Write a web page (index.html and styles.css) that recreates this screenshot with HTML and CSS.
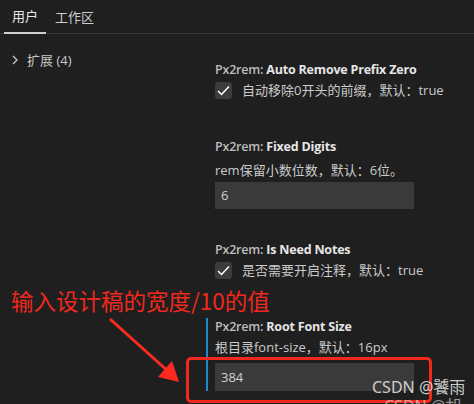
FILE: index.html
```html
<!DOCTYPE html>
<html lang="zh-CN">
<head>
    <meta charset="UTF-8">
    <title>设置 - Px2rem</title>
    <link rel="stylesheet" href="styles.css">
</head>
<body>
    <div class="tabs">
        <span class="tab active">用户</span>
        <span class="tab">工作区</span>
    </div>

    <div class="main">
        <aside class="toc">
            <div class="toc-item">
                <svg class="chevron" width="8" height="10" viewBox="0 0 8 10">
                    <path d="M2 1 L6 5 L2 9" fill="none" stroke="#cccccc" stroke-width="1.3"/>
                </svg>
                <span>扩展 (4)</span>
            </div>
        </aside>

        <section class="settings">
            <div class="setting setting-first">
                <div class="setting-title"><span class="category">Px2rem: </span>Auto Remove Prefix Zero</div>
                <label class="check-row">
                    <span class="checkbox">
                        <svg width="13" height="11" viewBox="0 0 13 11"><path d="M1 6 L4.5 9.5 L12 1.5" fill="none" stroke="#ffffff" stroke-width="1.5"/></svg>
                    </span>
                    <span class="desc">自动移除0开头的前缀，默认：true</span>
                </label>
            </div>

            <div class="setting setting-digits">
                <div class="setting-title"><span class="category">Px2rem: </span>Fixed Digits</div>
                <div class="desc desc-block">rem保留小数位数，默认：6位。</div>
                <div class="input">6</div>
            </div>

            <div class="setting setting-notes">
                <div class="setting-title"><span class="category">Px2rem: </span>Is Need Notes</div>
                <label class="check-row">
                    <span class="checkbox">
                        <svg width="13" height="11" viewBox="0 0 13 11"><path d="M1 6 L4.5 9.5 L12 1.5" fill="none" stroke="#ffffff" stroke-width="1.5"/></svg>
                    </span>
                    <span class="desc">是否需要开启注释，默认：true</span>
                </label>
            </div>

            <div class="setting setting-focused">
                <div class="setting-title"><span class="category">Px2rem: </span>Root Font Size</div>
                <div class="desc desc-block desc-root">根目录font-size，默认：16px</div>
                <div class="input input-root">384</div>
            </div>
        </section>
    </div>

    <!-- 标注 -->
    <div class="note-text">输入设计稿的宽度/10的值</div>
    <div class="note-box"></div>
    <svg class="note-arrow" width="474" height="404" viewBox="0 0 474 404">
        <line x1="110" y1="319" x2="170" y2="373" stroke="#ff2a1f" stroke-width="3"/>
        <polygon points="179,382 158,377 172,361" fill="#ff2a1f"/>
    </svg>

    <div class="watermark">CSDN @饕雨</div>
    <div class="watermark watermark-2">CSDN @胡阳了</div>
</body>
</html>
```

FILE: styles.css
```css
html {
    overflow: hidden;
}
body {
    margin: 0;
    background: #1f1f1f;
    color: #cccccc;
    font-family: "Open Sans", "Noto Sans CJK SC", sans-serif;
    font-size: 13px;
    width: 474px;
    height: 404px;
    overflow: hidden;
    position: relative;
}
.tabs {
    display: flex;
    height: 33px;
    padding-left: 4px;
    border-bottom: 1px solid #383838;
}
.tab {
    padding: 0 8px;
    line-height: 33px;
    color: #cfcfcf;
    margin-right: 1px;
    font-family: "Noto Sans CJK SC", sans-serif;
}
.tab.active {
    color: #e8e8e8;
    border-bottom: 2px solid #cfcfcf;
    line-height: 32px;
    height: 32px;
    margin-bottom: -1px;
}
.main {
    display: flex;
}
.toc {
    width: 206px;
    flex-shrink: 0;
}
.toc-item {
    margin-top: 15px;
    padding-left: 11px;
    display: flex;
    align-items: center;
    gap: 8px;
    line-height: 22px;
    color: #c8c8c8;
}
.settings {
    flex: 1;
    padding-top: 27px;
}
.setting {
    border-left: 2px solid transparent;
    padding-left: 7px;
}
.setting-title {
    font-weight: 700;
    color: #e6e6e6;
    line-height: 18px;
    font-size: 12.5px;
    letter-spacing: -0.2px;
}
.category {
    color: #bdbdbd;
    font-weight: 600;
}
.check-row {
    display: flex;
    align-items: center;
    gap: 10px;
    margin-top: 2px;
}
.checkbox {
    width: 17px;
    height: 17px;
    background: #3c3c3c;
    border-radius: 3px;
    display: flex;
    align-items: center;
    justify-content: center;
}
.desc {
    color: #cbcbcb;
    line-height: 18px;
}
.desc-block {
    margin-top: 5px;
}
.input {
    margin-top: 3px;
    width: 193px;
    height: 27px;
    line-height: 27px;
    padding-left: 6px;
    background: #3a3a3a;
    color: #d0d0d0;
}
.setting-digits {
    margin-top: 39px;
}
.setting-notes {
    margin-top: 32px;
}
.setting-focused {
    margin-top: 39px;
    border-left-color: #1f8ad0;
}
.desc-root {
    margin-top: 2px;
}
.input-root {
    margin-top: 7px;
    height: 28px;
    line-height: 28px;
}
.note-text {
    position: absolute;
    left: 11px;
    top: 285px;
    font-size: 22.5px;
    line-height: 30px;
    color: #f0281d;
    font-family: "Noto Sans CJK SC", sans-serif;
}
.note-box {
    position: absolute;
    left: 186px;
    top: 357px;
    width: 240px;
    height: 40px;
    border: 3px solid #f0281d;
    border-radius: 5px;
}
.note-arrow {
    position: absolute;
    left: 0;
    top: 0;
}
.watermark {
    position: absolute;
    left: 372px;
    top: 376px;
    font-size: 16px;
    line-height: 22px;
    color: rgba(235, 235, 235, 0.85);
    font-family: "Noto Sans", "Noto Sans CJK SC", sans-serif;
}
.watermark-2 {
    left: 384px;
    top: 395px;
    color: rgba(235, 235, 235, 0.6);
}
```
